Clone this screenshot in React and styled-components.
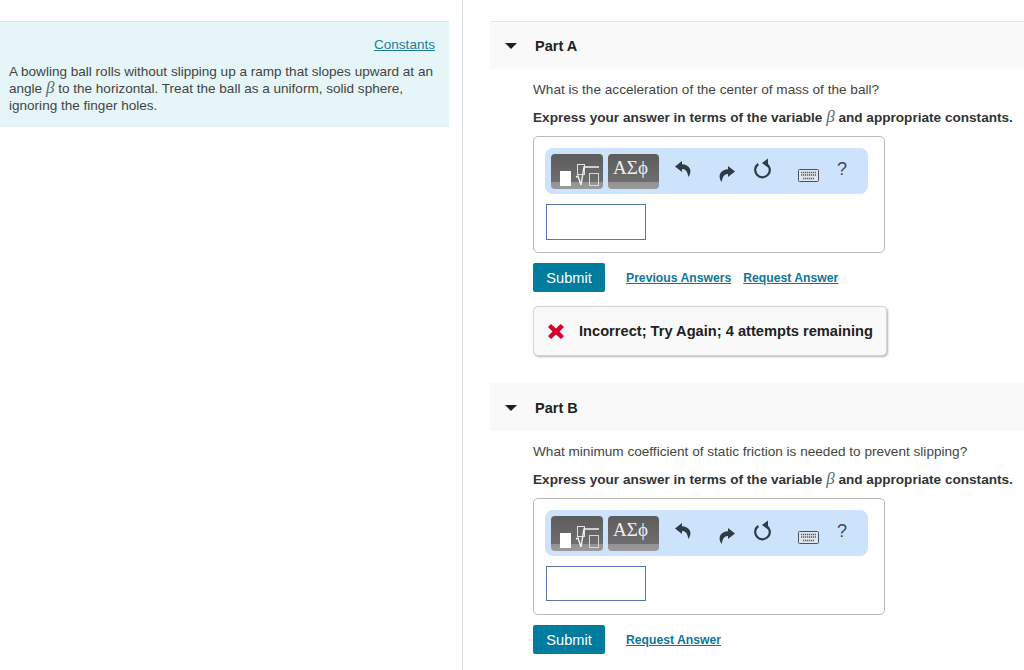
import React from "react";
import styled, { createGlobalStyle } from "styled-components";

const GlobalStyle = createGlobalStyle`
  html, body {
    margin: 0;
    padding: 0;
    height: 670px;
    overflow: hidden;
    background: #fff;
    font-family: "Liberation Sans", Arial, sans-serif;
    color: #333;
  }
`;

const Page = styled.div`
  display: grid;
  grid-template-columns: 449px 1fr;
  column-gap: 13px;
  width: 1024px;
  height: 670px;
`;

const InfoPanel = styled.aside`
  align-self: start;
  box-sizing: border-box;
  margin-top: 21px;
  height: 106px;
  padding: 15px 14px 0 9px;
  background: #e5f5f8;
  border-top: 1px solid #d8e4ea;
`;

const ConstantsRow = styled.div`
  text-align: right;
  font-size: 13.55px;
  line-height: 16px;
  margin-bottom: 10px;
`;

const TextLink = styled.a`
  color: #1d7f9d;
  text-decoration: underline;
`;

const InfoText = styled.p`
  margin: 0;
  font-size: 13.55px;
  line-height: 17px;
  color: #444;
`;

const Beta = styled.span`
  display: inline-block;
  font-family: "Liberation Serif", serif;
  font-style: italic;
  font-size: 17px;
  line-height: 14px;
  font-weight: 400;
  color: #5a6a7a;
`;

const Main = styled.main`
  border-left: 1px solid #d5dde2;
  padding: 21px 0 0 27px;
`;

const Section = styled.section`
  margin-bottom: ${(p) => p.$gap}px;
`;

const PartHeader = styled.header`
  display: flex;
  align-items: center;
  height: 48px;
  background: #f9f9f9;
  border-top: 1px solid ${(p) => (p.$ruled ? "#e6e6e6" : "#f9f9f9")};
  box-sizing: border-box;
`;

const Caret = styled.span`
  width: 0;
  height: 0;
  margin-left: 15px;
  border-left: 6px solid transparent;
  border-right: 6px solid transparent;
  border-top: 6px solid #1f1f1f;
`;

const PartTitle = styled.h2`
  margin: 0 0 0 18px;
  font-size: 14.5px;
  font-weight: 700;
  color: #222;
`;

const PartBody = styled.div`
  padding: 13px 0 0 43px;
`;

const Question = styled.p`
  margin: 0;
  font-size: 13.6px;
  line-height: 16px;
  color: #444;
`;

const Instruction = styled.p`
  margin: 11px 0 9px;
  font-size: 13.6px;
  line-height: 18px;
  font-weight: 700;
  color: #333;
  white-space: nowrap;
`;

const AnswerBox = styled.div`
  box-sizing: border-box;
  width: 352px;
  height: 117px;
  padding: 11px 12px;
  border: 1px solid #b9b9b9;
  border-radius: 5px;
  background: #fff;
`;

const Toolbar = styled.div`
  display: flex;
  align-items: flex-start;
  box-sizing: border-box;
  width: 323px;
  height: 46px;
  margin-left: -1px;
  padding: 6px;
  background: #cce3fb;
  border-radius: 8px;
`;

const ToolGroup = styled.div`
  position: relative;
  box-sizing: border-box;
  width: ${(p) => p.$width}px;
  height: 35px;
  margin-right: 5px;
  padding-right: ${(p) => p.$shift || 0}px;
  border-radius: 4px;
  background: linear-gradient(#5c5c5c 0, #6e6e6e 81%, #939393 81%, #9a9a9a 100%);
  color: #eee;
  font-family: "Liberation Serif", serif;
  font-size: 19px;
  line-height: 27px;
  text-align: center;
  overflow: hidden;
`;

const ToolIcon = styled.svg`
  display: block;
  flex: none;
  margin-left: ${(p) => p.$left}px;
  margin-top: ${(p) => p.$top}px;
`;

const HelpMark = styled.span`
  margin-left: 18px;
  margin-top: 5px;
  font-size: 18px;
  line-height: 20px;
  color: #3d4a57;
`;

const AnswerInput = styled.div`
  box-sizing: border-box;
  width: 100px;
  height: ${(p) => p.$height}px;
  margin-top: 10px;
  border: 1px solid #5a76a8;
  background: #fff;
`;

const ActionRow = styled.div`
  display: flex;
  align-items: center;
  height: 29px;
  margin-top: 10px;
`;

const SubmitButton = styled.button`
  box-sizing: border-box;
  width: 72px;
  height: 29px;
  margin-right: 21px;
  padding: 0;
  border: 0;
  border-radius: 2px;
  background: #007c9e;
  color: #fff;
  font-family: inherit;
  font-size: 14.6px;
`;

const ActionLink = styled(TextLink)`
  margin-right: 12px;
  font-size: 12.2px;
  font-weight: 700;
  color: #10769a;
`;

const Feedback = styled.div`
  display: flex;
  align-items: center;
  box-sizing: border-box;
  width: 354px;
  height: 50px;
  margin-top: 14px;
  padding-left: 14px;
  background: #f9f9f9;
  border: 1px solid #d4d4d4;
  border-radius: 5px;
  box-shadow: 1px 1px 2px #b5b5b5;
  font-size: 14.65px;
  font-weight: 700;
  color: #222;
`;

const FeedbackIcon = styled.svg`
  flex: none;
  margin-right: 15px;
`;

const MatrixIcon = () => (
  <svg width="52" height="35" viewBox="0 0 52 35" fill="none">
    <rect x="9" y="17" width="11" height="15" fill="#fff" />
    <rect x="26.5" y="10.5" width="7" height="10" stroke="#e2e2e2" />
    <path d="M25 23l2-1 3 9 3-18h15" stroke="#f2f2f2" strokeWidth="1.4" />
    <rect x="38.5" y="19.5" width="9" height="12" stroke="#d8d8d8" />
  </svg>
);

const UndoIcon = () => (
  <ToolIcon $left={11} $top={7} width="16" height="16" viewBox="0 0 16 16">
    <path d="M7 0L0 5.5 7 11V8c3 0 4.5 1.500 5.500 4.500L13.500 16C15.500 13 16 10 14.800 7.500 13.500 4.800 10.500 3.500 7 3.300Z" fill="#2f3b47" />
  </ToolIcon>
);

const RedoIcon = () => (
  <ToolIcon $left={28} $top={12} width="16" height="16" viewBox="0 0 16 16">
    <path d="M9 0l7 5.500L9 11V8C6 8 4.500 9.500 3.500 12.500L2.500 16C.5 13 0 10 1.200 7.500 2.500 4.800 5.500 3.500 9 3.300Z" fill="#2f3b47" />
  </ToolIcon>
);

const ResetIcon = () => (
  <ToolIcon $left={19} $top={4} width="18" height="21" viewBox="0 0 18 21" fill="none">
    <path d="M4.300 6A7.300 7.300 0 1 0 12 5.600" stroke="#2f3b47" strokeWidth="2.200" />
    <path d="M14 .5v9L8 5Z" fill="#2f3b47" />
  </ToolIcon>
);

const KeyboardIcon = () => (
  <ToolIcon $left={26} $top={15} width="21" height="13" viewBox="0 0 21 13" fill="none">
    <rect x=".5" y=".5" width="20" height="12" rx="1" fill="#dfe6ee" stroke="#47525e" />
    <path d="M3 3.500h15M3 6h15M5 9.500h11" stroke="#56616d" strokeWidth="1.400" strokeDasharray="1.300 .7" />
  </ToolIcon>
);

const AnswerArea = ({ inputHeight }) => (
  <AnswerBox>
    <Toolbar>
      <ToolGroup $width={52}>
        <MatrixIcon />
      </ToolGroup>
      <ToolGroup $width={51} $shift={6}>AΣϕ</ToolGroup>
      <UndoIcon />
      <RedoIcon />
      <ResetIcon />
      <KeyboardIcon />
      <HelpMark>?</HelpMark>
    </Toolbar>
    <AnswerInput $height={inputHeight} />
  </AnswerBox>
);

const Part = ({ label, ruled, question, gap, inputHeight, links, children }) => (
  <Section $gap={gap}>
    <PartHeader $ruled={ruled}>
      <Caret />
      <PartTitle>{label}</PartTitle>
    </PartHeader>
    <PartBody>
      <Question>{question}</Question>
      <Instruction>
        Express your answer in terms of the variable <Beta>β</Beta> and appropriate constants.
      </Instruction>
      <AnswerArea inputHeight={inputHeight} />
      <ActionRow>
        <SubmitButton>Submit</SubmitButton>
        {links.map((l) => (
          <ActionLink key={l}>{l}</ActionLink>
        ))}
      </ActionRow>
      {children}
    </PartBody>
  </Section>
);

const App = () => (
  <Page>
    <GlobalStyle />
    <InfoPanel>
      <ConstantsRow>
        <TextLink>Constants</TextLink>
      </ConstantsRow>
      <InfoText>
        A bowling ball rolls without slipping up a ramp that slopes upward at an angle <Beta>β</Beta> to the
        horizontal. Treat the ball as a uniform, solid sphere, ignoring the finger holes.
      </InfoText>
    </InfoPanel>
    <Main>
      <Part
        label="Part A"
        ruled
        gap={27}
        inputHeight={36}
        question="What is the acceleration of the center of mass of the ball?"
        links={["Previous Answers", "Request Answer"]}
      >
        <Feedback>
          <FeedbackIcon width="16" height="15" viewBox="0 0 16 15">
            <path d="M0 3L3 0l5 4.500L12.500 0 16 3l-4.500 4.500L16 12l-3 3-5-4.500L3 15 0 12l4.500-4.500Z" fill="#d5002b" />
          </FeedbackIcon>
          Incorrect; Try Again; 4 attempts remaining
        </Feedback>
      </Part>
      <Part
        label="Part B"
        gap={0}
        inputHeight={35}
        question="What minimum coefficient of static friction is needed to prevent slipping?"
        links={["Request Answer"]}
      />
    </Main>
  </Page>
);

export default App;
